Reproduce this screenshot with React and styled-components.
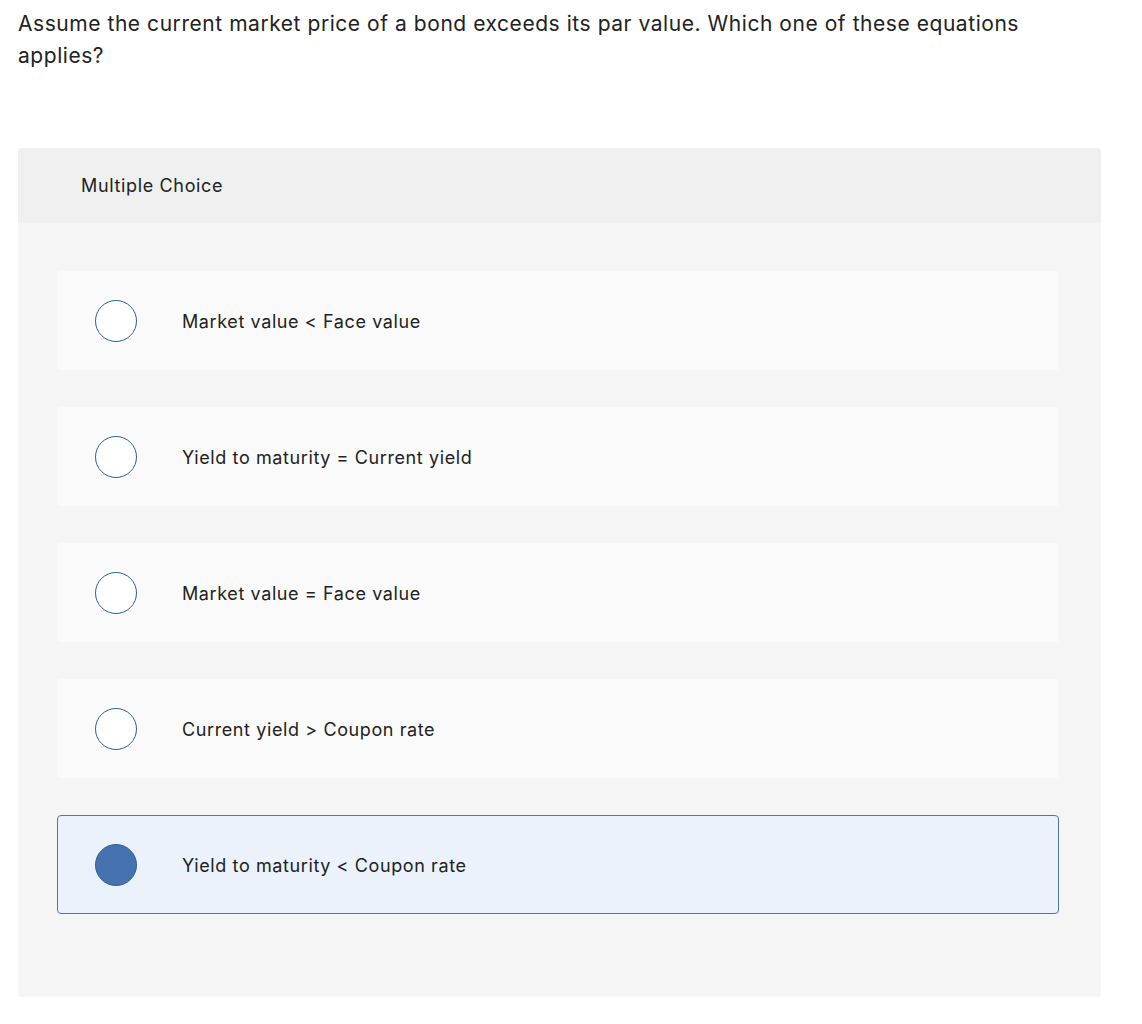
import React from "react";
import styled, { createGlobalStyle } from "styled-components";

const Global = createGlobalStyle`
  html, body { margin: 0; padding: 0; background: #fff; }
  body { font-family: Inter, "Liberation Sans", sans-serif; color: #222; }
`;

const Page = styled.div`
  padding: 8px 41px 0 18px;
`;

const Question = styled.p`
  margin: 0;
  font-size: 21px;
  line-height: 32px;
  letter-spacing: 0.55px;
  color: #222;
  max-width: 1040px;
`;

const Panel = styled.section`
  margin-top: 76px;
  width: 1083px;
  background: #f5f5f5;
  border-radius: 4px;
  overflow: hidden;
`;

const Header = styled.div`
  height: 75px;
  background: #f0f0f0;
  display: flex;
  align-items: center;
  padding-left: 63px;
  font-size: 18px;
  letter-spacing: 0.65px;
  color: #222;
`;

const List = styled.div`
  display: flex;
  flex-direction: column;
  gap: 37px;
  padding: 48px 42px 83px 39px;
`;

const Option = styled.label`
  height: ${(p) => (p.$selected ? "97px" : "99px")};
  display: flex;
  align-items: center;
  background: ${(p) => (p.$selected ? "#ebf2fb" : "#fafafa")};
  border: ${(p) => (p.$selected ? "1px solid #4a76b5" : "none")};
  border-radius: 4px;
  padding-left: ${(p) => (p.$selected ? "37px" : "38px")};
  cursor: pointer;
`;

const Radio = styled.span`
  width: 40px;
  height: 40px;
  flex: none;
  border-radius: 50%;
  border: 1px solid #2f5f9e;
  background: ${(p) => (p.$selected ? "#4673b0" : "#fff")};
  margin-right: 45px;
`;

const Label = styled.span`
  font-size: 18px;
  letter-spacing: 0.6px;
  padding-top: 1px;
  color: #222;
`;

const options = [
  "Market value < Face value",
  "Yield to maturity = Current yield",
  "Market value = Face value",
  "Current yield > Coupon rate",
  "Yield to maturity < Coupon rate",
];

export default function App() {
  const selected = 4;
  return (
    <>
      <Global />
      <Page>
        <Question>
          Assume the current market price of a bond exceeds its par value. Which one of these equations
          applies?
        </Question>
        <Panel>
          <Header>Multiple Choice</Header>
          <List>
            {options.map((o, i) => (
              <Option key={i} $selected={i === selected}>
                <Radio $selected={i === selected} />
                <Label>{o}</Label>
              </Option>
            ))}
          </List>
        </Panel>
      </Page>
    </>
  );
}
